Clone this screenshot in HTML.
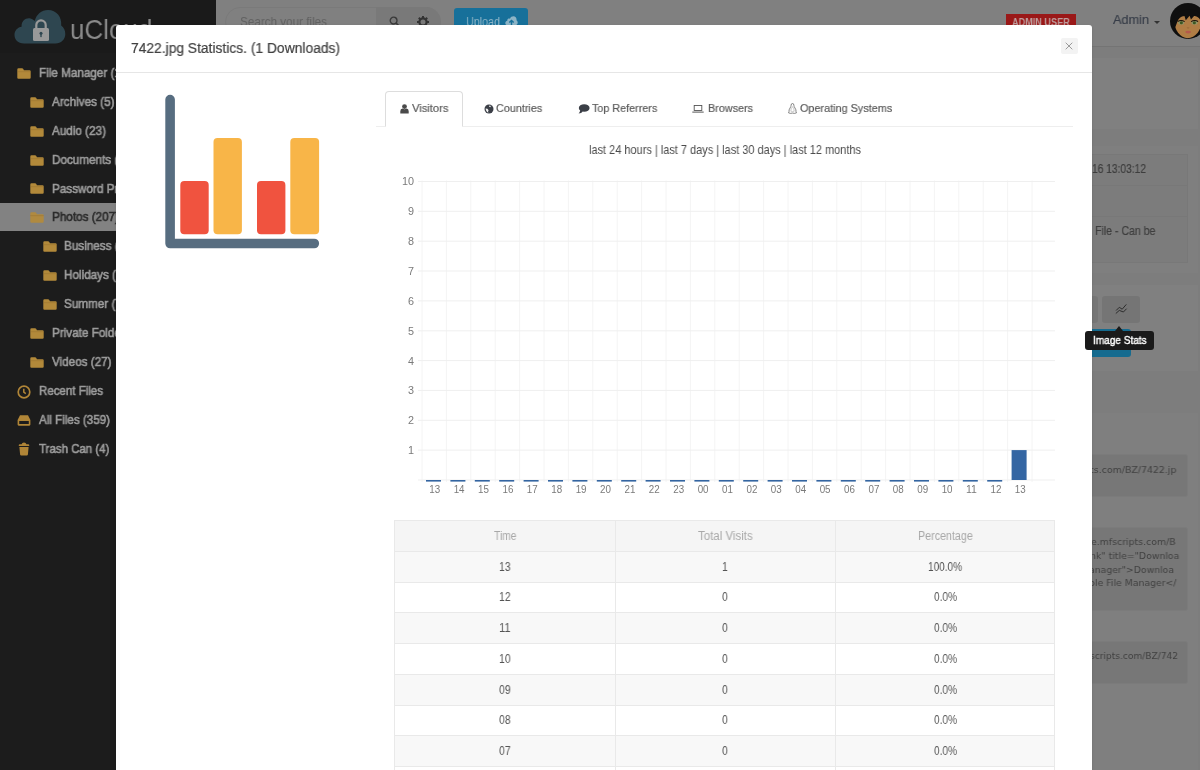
<!DOCTYPE html>
<html lang="en"><head><meta charset="utf-8"><title>uCloud - File Manager</title>
<style>
html,body{margin:0;padding:0}
body{width:1200px;height:770px;overflow:hidden;position:relative;background:#7d7d7d;font-family:"Liberation Sans",sans-serif;color:#555}
.a{position:absolute;white-space:nowrap}
.t{will-change:transform}
.ic{position:absolute;display:block}
#side{left:0;top:0;width:216px;height:770px;background:#1c1c1c;overflow:hidden}
#side .hd{left:0;top:0;width:216px;height:53px;background:#1a1a1a}
.sel{left:0;width:216px;height:28px;background:#828282}
#top{left:216px;top:0;width:984px;height:46px;background:#808080;border-bottom:1px solid #747474}
#modal{left:116px;top:25px;width:976px;height:760px;background:#fff;border-radius:3px;box-shadow:0 1px 3px rgba(0,0,0,.12)}
table{border-collapse:collapse;table-layout:fixed}
td,th{border:1px solid #e9e9e9;padding:0}
th{background:#f5f5f5}
tr.o td{background:#f8f8f8}
.box{background:#777;border:1px solid #7b7b7b;border-radius:3px;box-sizing:border-box;overflow:hidden}
</style></head><body>

<div id="side" class="a"><div class="hd a"></div>
<svg class="ic" style="left:13px;top:8px" width="54" height="38" viewBox="0 0 54 38">
<path d="M11 35.5 C5 35.5 1.5 31.5 1.5 27 C1.5 22.5 4.8 19.3 8.6 18.8 C8.2 12.5 13 9.5 17.5 10.5 C19.3 11 20.6 11.8 21.7 13 C23.2 6.5 28.5 2 35 2 C43.5 2 49 9 48.2 17.5 C51 19.5 52.3 22.5 52.3 26 C52.3 31.5 48 35.5 42.5 35.5 Z" fill="#2e4650"/>
<rect x="20" y="20" width="16" height="13" rx="1.5" fill="#999"/>
<path d="M23.3 20.5 V17 A4.7 4.7 0 0 1 32.7 17 V20.5" fill="none" stroke="#999" stroke-width="2.2"/>
<circle cx="28" cy="25.3" r="1.5" fill="#2e4650"/><rect x="27.3" y="25.5" width="1.4" height="3.6" fill="#2e4650"/>
</svg>
<div class="a t" style="left:70.00px;top:16.30px;font-size:28px;line-height:1;color:#8a8a8a;transform-origin:0 0;transform:scaleX(0.9275)">uCloud</div>
<svg class="ic" style="left:17px;top:67.5px" width="14" height="11" viewBox="0 0 14 11"><path d="M0.3 1.4 Q0.3 0.2 1.5 0.2 H5 Q5.9 0.2 6.3 1 L6.9 2.3 H12.6 Q13.7 2.3 13.7 3.4 V9.7 Q13.7 10.8 12.6 10.8 H1.4 Q0.3 10.8 0.3 9.7 Z" fill="#b2893a"/><path d="M0.3 3.4 H13.7 V4.1 H0.3 Z" fill="#8f6c2c" opacity="0.55"/></svg>
<div class="a t" style="left:39.00px;top:67.09px;font-size:12.3px;line-height:1;color:#9c9c9c;transform-origin:0 0;transform:scaleX(0.9510);-webkit-text-stroke:0.6px #9c9c9c">File Manager (12)</div>
<svg class="ic" style="left:30px;top:96.5px" width="14" height="11" viewBox="0 0 14 11"><path d="M0.3 1.4 Q0.3 0.2 1.5 0.2 H5 Q5.9 0.2 6.3 1 L6.9 2.3 H12.6 Q13.7 2.3 13.7 3.4 V9.7 Q13.7 10.8 12.6 10.8 H1.4 Q0.3 10.8 0.3 9.7 Z" fill="#b2893a"/><path d="M0.3 3.4 H13.7 V4.1 H0.3 Z" fill="#8f6c2c" opacity="0.55"/></svg>
<div class="a t" style="left:51.50px;top:96.09px;font-size:12.3px;line-height:1;color:#9c9c9c;transform-origin:0 0;transform:scaleX(0.9526);-webkit-text-stroke:0.6px #9c9c9c">Archives (5)</div>
<svg class="ic" style="left:30px;top:125.5px" width="14" height="11" viewBox="0 0 14 11"><path d="M0.3 1.4 Q0.3 0.2 1.5 0.2 H5 Q5.9 0.2 6.3 1 L6.9 2.3 H12.6 Q13.7 2.3 13.7 3.4 V9.7 Q13.7 10.8 12.6 10.8 H1.4 Q0.3 10.8 0.3 9.7 Z" fill="#b2893a"/><path d="M0.3 3.4 H13.7 V4.1 H0.3 Z" fill="#8f6c2c" opacity="0.55"/></svg>
<div class="a t" style="left:51.50px;top:125.09px;font-size:12.3px;line-height:1;color:#9c9c9c;transform-origin:0 0;transform:scaleX(0.9515);-webkit-text-stroke:0.6px #9c9c9c">Audio (23)</div>
<svg class="ic" style="left:30px;top:154.5px" width="14" height="11" viewBox="0 0 14 11"><path d="M0.3 1.4 Q0.3 0.2 1.5 0.2 H5 Q5.9 0.2 6.3 1 L6.9 2.3 H12.6 Q13.7 2.3 13.7 3.4 V9.7 Q13.7 10.8 12.6 10.8 H1.4 Q0.3 10.8 0.3 9.7 Z" fill="#b2893a"/><path d="M0.3 3.4 H13.7 V4.1 H0.3 Z" fill="#8f6c2c" opacity="0.55"/></svg>
<div class="a t" style="left:51.50px;top:154.09px;font-size:12.3px;line-height:1;color:#9c9c9c;transform-origin:0 0;transform:scaleX(0.9510);-webkit-text-stroke:0.6px #9c9c9c">Documents (14)</div>
<svg class="ic" style="left:30px;top:183.0px" width="14" height="11" viewBox="0 0 14 11"><path d="M0.3 1.4 Q0.3 0.2 1.5 0.2 H5 Q5.9 0.2 6.3 1 L6.9 2.3 H12.6 Q13.7 2.3 13.7 3.4 V9.7 Q13.7 10.8 12.6 10.8 H1.4 Q0.3 10.8 0.3 9.7 Z" fill="#b2893a"/><path d="M0.3 3.4 H13.7 V4.1 H0.3 Z" fill="#8f6c2c" opacity="0.55"/></svg>
<div class="a t" style="left:51.50px;top:182.59px;font-size:12.3px;line-height:1;color:#9c9c9c;transform-origin:0 0;transform:scaleX(0.9510);-webkit-text-stroke:0.6px #9c9c9c">Password Protected (3)</div>
<div class="a sel" style="top:203px"></div>
<svg class="ic" style="left:30px;top:211.5px" width="14" height="11" viewBox="0 0 14 11"><path d="M0.3 1.4 Q0.3 0.2 1.5 0.2 H5 Q5.9 0.2 6.3 1 L6.9 2.3 H12.6 Q13.7 2.3 13.7 3.4 V9.7 Q13.7 10.8 12.6 10.8 H1.4 Q0.3 10.8 0.3 9.7 Z" fill="#b08a40"/><path d="M0.3 3.4 H13.7 V4.1 H0.3 Z" fill="#8f6c2c" opacity="0.55"/></svg>
<div class="a t" style="left:51.50px;top:211.09px;font-size:12.3px;line-height:1;color:#2b2b2b;transform-origin:0 0;transform:scaleX(0.9510);-webkit-text-stroke:0.6px #2b2b2b">Photos (207)</div>
<svg class="ic" style="left:43px;top:240.5px" width="14" height="11" viewBox="0 0 14 11"><path d="M0.3 1.4 Q0.3 0.2 1.5 0.2 H5 Q5.9 0.2 6.3 1 L6.9 2.3 H12.6 Q13.7 2.3 13.7 3.4 V9.7 Q13.7 10.8 12.6 10.8 H1.4 Q0.3 10.8 0.3 9.7 Z" fill="#b2893a"/><path d="M0.3 3.4 H13.7 V4.1 H0.3 Z" fill="#8f6c2c" opacity="0.55"/></svg>
<div class="a t" style="left:64.00px;top:240.09px;font-size:12.3px;line-height:1;color:#9c9c9c;transform-origin:0 0;transform:scaleX(0.9510);-webkit-text-stroke:0.6px #9c9c9c">Business (41)</div>
<svg class="ic" style="left:43px;top:269.5px" width="14" height="11" viewBox="0 0 14 11"><path d="M0.3 1.4 Q0.3 0.2 1.5 0.2 H5 Q5.9 0.2 6.3 1 L6.9 2.3 H12.6 Q13.7 2.3 13.7 3.4 V9.7 Q13.7 10.8 12.6 10.8 H1.4 Q0.3 10.8 0.3 9.7 Z" fill="#b2893a"/><path d="M0.3 3.4 H13.7 V4.1 H0.3 Z" fill="#8f6c2c" opacity="0.55"/></svg>
<div class="a t" style="left:64.00px;top:269.09px;font-size:12.3px;line-height:1;color:#9c9c9c;transform-origin:0 0;transform:scaleX(0.9510);-webkit-text-stroke:0.6px #9c9c9c">Holidays (96)</div>
<svg class="ic" style="left:43px;top:298.5px" width="14" height="11" viewBox="0 0 14 11"><path d="M0.3 1.4 Q0.3 0.2 1.5 0.2 H5 Q5.9 0.2 6.3 1 L6.9 2.3 H12.6 Q13.7 2.3 13.7 3.4 V9.7 Q13.7 10.8 12.6 10.8 H1.4 Q0.3 10.8 0.3 9.7 Z" fill="#b2893a"/><path d="M0.3 3.4 H13.7 V4.1 H0.3 Z" fill="#8f6c2c" opacity="0.55"/></svg>
<div class="a t" style="left:64.00px;top:298.09px;font-size:12.3px;line-height:1;color:#9c9c9c;transform-origin:0 0;transform:scaleX(0.9510);-webkit-text-stroke:0.6px #9c9c9c">Summer (70)</div>
<svg class="ic" style="left:30px;top:327.5px" width="14" height="11" viewBox="0 0 14 11"><path d="M0.3 1.4 Q0.3 0.2 1.5 0.2 H5 Q5.9 0.2 6.3 1 L6.9 2.3 H12.6 Q13.7 2.3 13.7 3.4 V9.7 Q13.7 10.8 12.6 10.8 H1.4 Q0.3 10.8 0.3 9.7 Z" fill="#b2893a"/><path d="M0.3 3.4 H13.7 V4.1 H0.3 Z" fill="#8f6c2c" opacity="0.55"/></svg>
<div class="a t" style="left:51.50px;top:327.09px;font-size:12.3px;line-height:1;color:#9c9c9c;transform-origin:0 0;transform:scaleX(0.9510);-webkit-text-stroke:0.6px #9c9c9c">Private Folder (6)</div>
<svg class="ic" style="left:30px;top:356.5px" width="14" height="11" viewBox="0 0 14 11"><path d="M0.3 1.4 Q0.3 0.2 1.5 0.2 H5 Q5.9 0.2 6.3 1 L6.9 2.3 H12.6 Q13.7 2.3 13.7 3.4 V9.7 Q13.7 10.8 12.6 10.8 H1.4 Q0.3 10.8 0.3 9.7 Z" fill="#b2893a"/><path d="M0.3 3.4 H13.7 V4.1 H0.3 Z" fill="#8f6c2c" opacity="0.55"/></svg>
<div class="a t" style="left:51.50px;top:356.09px;font-size:12.3px;line-height:1;color:#9c9c9c;transform-origin:0 0;transform:scaleX(0.9494);-webkit-text-stroke:0.6px #9c9c9c">Videos (27)</div>
<svg class="ic" style="left:17px;top:384.5px" width="14" height="14" viewBox="0 0 14 14"><circle cx="7" cy="7" r="5.8" fill="none" stroke="#b08537" stroke-width="1.7"/><path d="M6.8 3.8 V7.2 L8.8 8.6" fill="none" stroke="#b08537" stroke-width="1.5"/></svg>
<div class="a t" style="left:39.00px;top:385.09px;font-size:12.3px;line-height:1;color:#9c9c9c;transform-origin:0 0;transform:scaleX(0.9364);-webkit-text-stroke:0.6px #9c9c9c">Recent Files</div>
<svg class="ic" style="left:17px;top:414.5px" width="14" height="11" viewBox="0 0 14 11"><path d="M3 0.3 H11 L13.4 5 V9.6 Q13.4 10.7 12.3 10.7 H1.7 Q0.6 10.7 0.6 9.6 V5 Z M2.2 6 V8.9 H11.8 V6 Z" fill="#b08537" fill-rule="evenodd"/></svg>
<div class="a t" style="left:39.00px;top:414.09px;font-size:12.3px;line-height:1;color:#9c9c9c;transform-origin:0 0;transform:scaleX(0.9445);-webkit-text-stroke:0.6px #9c9c9c">All Files (359)</div>
<svg class="ic" style="left:18px;top:442px" width="12" height="14" viewBox="0 0 12 14"><path d="M0.8 3 Q0.8 2.2 1.8 2.2 H3.6 Q4 0.5 6 0.5 Q8 0.5 8.4 2.2 H10.2 Q11.2 2.2 11.2 3 V4 H0.8 Z M1.4 4.9 H10.6 L9.9 12.4 Q9.8 13.5 8.7 13.5 H3.3 Q2.2 13.5 2.1 12.4 Z" fill="#b08537"/></svg>
<div class="a t" style="left:39.30px;top:443.09px;font-size:12.3px;line-height:1;color:#9c9c9c;transform-origin:0 0;transform:scaleX(0.9336);-webkit-text-stroke:0.6px #9c9c9c">Trash Can (4)</div>
</div>
<div id="top" class="a">
<div class="a" style="left:9px;top:7px;width:216px;height:30px;border:1px solid #7a7a7a;border-radius:15px;box-sizing:border-box;background:#808080"></div>
<div class="a" style="left:160px;top:7px;width:65px;height:30px;border-radius:0 15px 15px 0;background:#797979"></div>
<svg class="ic" style="left:173px;top:16px" width="11" height="11" viewBox="0 0 11 11"><circle cx="4.6" cy="4.6" r="3.4" fill="none" stroke="#3a3a3a" stroke-width="1.3"/><path d="M7.1 7.1 L10 10" stroke="#3a3a3a" stroke-width="1.6"/></svg>
<svg class="ic" style="left:201px;top:16px" width="12" height="12" viewBox="0 0 12 12"><circle cx="6" cy="6" r="3.6" fill="none" stroke="#333" stroke-width="2.2"/><g stroke="#333" stroke-width="2"><path d="M6 0 V2.2 M6 9.8 V12 M0 6 H2.2 M9.8 6 H12 M1.8 1.8 L3.2 3.2 M8.8 8.8 L10.2 10.2 M1.8 10.2 L3.2 8.8 M8.8 3.2 L10.2 1.8"/></g></svg>
<div class="a" style="left:238px;top:8px;width:74px;height:30px;border-radius:3px;background:#17709a"></div>
<svg class="ic" style="left:289px;top:16px" width="13" height="10" viewBox="0 0 13 10"><path d="M3 9.5 C1.2 9.5 0.3 8.3 0.3 7 C0.3 5.7 1.3 4.8 2.3 4.7 C2.2 2.8 3.8 2.2 5 2.8 C5.6 1 7 0.3 8.4 0.3 C10.6 0.3 11.8 2.2 11.5 4.2 C12.3 4.7 12.7 5.6 12.7 6.6 C12.7 8.3 11.5 9.5 10 9.5 Z" fill="#8db4c6"/><path d="M6.5 9.5 V5 M4.3 6.6 L6.5 4.4 L8.7 6.6" stroke="#17709a" stroke-width="1.4" fill="none"/></svg>
<div class="a" style="left:790px;top:14.4px;width:70.2px;height:18px;background:#9a1818"></div>
<div class="a" style="left:938px;top:21px;width:0;height:0;border-left:3.5px solid transparent;border-right:3.5px solid transparent;border-top:3.5px solid #333"></div>
<svg class="ic" style="left:953.8px;top:3.4px" width="36.4" height="36.4" viewBox="0 0 36 36"><defs><clipPath id="av"><circle cx="17.8" cy="17.8" r="17.8"/></clipPath></defs><g clip-path="url(#av)"><rect width="36" height="36" fill="#0f0f0f"/><g transform="translate(-1.2 -0.7) scale(1.02)">
<path d="M5.5 17 Q5 24 9 29.5 Q13 34.5 18.3 34.8 Q24 34.5 28 29.5 Q32 24 31.5 17 Q30 10.5 18.5 10.5 Q7 10.5 5.5 17 Z" fill="#b07d45"/>
<path d="M3 19 Q7 7 20 7 Q31 7 34 17 L31.5 19 Q29 13 24.5 13.2 L21.5 16.8 L20.2 13 L16.5 17.4 L15.2 13.4 Q10 14 8.2 19 L6 25 Z" fill="#0f0f0f"/>
<ellipse cx="12" cy="19.8" rx="3" ry="1.8" fill="#8e9468"/><ellipse cx="25" cy="19.8" rx="3" ry="1.8" fill="#8e9468"/>
<circle cx="12.2" cy="19.8" r="1.5" fill="#3c5622"/><circle cx="24.8" cy="19.8" r="1.5" fill="#3c5622"/>
<path d="M8.6 18.6 Q12 16.6 15.4 18.8 M21.6 18.8 Q25 16.6 28.4 18.6" fill="none" stroke="#1a130c" stroke-width="1"/>
<path d="M17.6 24.6 Q18.6 25.4 19.8 24.6" fill="none" stroke="#946535" stroke-width="0.8"/>
<ellipse cx="18.8" cy="28.9" rx="2.8" ry="1.4" fill="#b4584c"/>
</g></g></svg>
</div>
<div class="a t" style="left:240.00px;top:15.30px;font-size:13px;line-height:1;color:#616161;transform-origin:0 0;transform:scaleX(0.8985)">Search your files</div>
<div class="a t" style="left:466.00px;top:14.60px;font-size:13px;line-height:1;color:#8db4c6;transform-origin:0 0;transform:scaleX(0.8252)">Upload</div>
<div class="a t" style="left:1012.40px;top:16.69px;font-size:11px;line-height:1;color:#bd9f9f;transform-origin:0 0;transform:scaleX(0.8296);font-weight:bold">ADMIN USER</div>
<div class="a t" style="left:1113.20px;top:13.47px;font-size:13.5px;line-height:1;color:#373d48;transform-origin:0 0;transform:scaleX(0.9408);-webkit-text-stroke:0.2px #373d48">Admin</div>
<div class="a" style="left:1000px;top:58px;width:197.5px;height:71px;background:#808080"></div>
<div class="a" style="left:1000px;top:146px;width:197.5px;height:127px;background:#7f7f7f"></div>
<div class="a" style="left:1000px;top:413px;width:197.5px;height:360px;background:#7f7f7f"></div>
<div class="a" style="left:1000px;top:154px;width:188px;height:109px;background:#7c7c7c;border:1px solid #787878;box-sizing:border-box"></div>
<div class="a" style="left:1000px;top:185px;width:188px;height:1px;background:#787878"></div>
<div class="a" style="left:1000px;top:216px;width:188px;height:1px;background:#787878"></div>
<div class="a t" style="left:1092.00px;top:163.23px;font-size:12.6px;line-height:1;color:#3e3e3e;transform-origin:0 0;transform:scaleX(0.8116);-webkit-text-stroke:0.2px #3e3e3e">16 13:03:12</div>
<div class="a t" style="left:1095.30px;top:224.53px;font-size:12.6px;line-height:1;color:#3e3e3e;transform-origin:0 0;transform:scaleX(0.8390);-webkit-text-stroke:0.2px #3e3e3e">File - Can be</div>
<div class="a" style="left:1000px;top:285px;width:197.5px;height:86px;background:#808080"></div>
<div class="a" style="left:1060px;top:295.5px;width:37.5px;height:27.7px;border-radius:3px;background:#767676"></div>
<div class="a" style="left:1101.5px;top:295.5px;width:38.6px;height:27.7px;border-radius:3px;background:#757575"></div>
<svg class="ic" style="left:1114px;top:302px" width="15" height="14" viewBox="1114 302 15 14"><path d="M1116.1 310.5 L1119.3 307.3 L1122.2 309.2 L1126.3 304.4 M1115.8 313.5 L1119.3 310.4 L1123.4 312 L1126.6 308.7" fill="none" stroke="#2c2c2c" stroke-width="1"/></svg>
<div class="a" style="left:1060px;top:328.8px;width:71px;height:27.8px;border-radius:3px;background:#166b8f"></div>
<div class="a box" style="left:1000px;top:454px;width:188px;height:43px"></div>
<div class="a t" style="left:1089.50px;top:464.57px;font-size:9.5px;line-height:1;color:#414141;transform-origin:0 0;transform:scaleX(0.9910);font-family:'DejaVu Sans','Liberation Sans',sans-serif">ts.com/BZ/7422.jp</div>
<div class="a box" style="left:1000px;top:527px;width:188px;height:84px"></div>
<div class="a t" style="left:1090.50px;top:537.17px;font-size:9.5px;line-height:1;color:#414141;transform-origin:0 0;transform:scaleX(0.9835);font-family:'DejaVu Sans','Liberation Sans',sans-serif">e.mfscripts.com/B</div>
<div class="a t" style="left:1089.50px;top:550.77px;font-size:9.5px;line-height:1;color:#414141;transform-origin:0 0;transform:scaleX(0.9812);font-family:'DejaVu Sans','Liberation Sans',sans-serif">nk" title="Downloa</div>
<div class="a t" style="left:1089.00px;top:564.57px;font-size:9.5px;line-height:1;color:#414141;transform-origin:0 0;transform:scaleX(0.9774);font-family:'DejaVu Sans','Liberation Sans',sans-serif">anager"&gt;Downloa</div>
<div class="a t" style="left:1088.50px;top:578.17px;font-size:9.5px;line-height:1;color:#414141;transform-origin:0 0;transform:scaleX(0.9802);font-family:'DejaVu Sans','Liberation Sans',sans-serif">ble File Manager&lt;/</div>
<div class="a box" style="left:1000px;top:641px;width:188px;height:43px"></div>
<div class="a t" style="left:1090.00px;top:650.97px;font-size:9.5px;line-height:1;color:#414141;transform-origin:0 0;transform:scaleX(0.9534);font-family:'DejaVu Sans','Liberation Sans',sans-serif">scripts.com/BZ/742</div>
<div id="modal" class="a">
<div class="a" style="left:0;top:47px;width:976px;height:1px;background:#e6e6e6"></div>
<div class="a" style="left:945px;top:13px;width:17px;height:16px;background:#f3f3f3;border-radius:2px"></div>
<svg class="ic" style="left:949px;top:17px" width="8" height="8" viewBox="0 0 8 8"><path d="M0.7 0.7 L7.3 7.3 M7.3 0.7 L0.7 7.3" stroke="#8a8a8a" stroke-width="0.85"/></svg>
<svg class="ic" style="left:44px;top:65px" width="170" height="165" viewBox="160 90 170 165">
<path d="M170.1 99.6 V243.5 H314.3" fill="none" stroke="#576d80" stroke-width="9.6" stroke-linecap="round" stroke-linejoin="round"/>
<rect x="180.3" y="181" width="28.4" height="53.2" rx="4" fill="#f0533f"/>
<rect x="213.5" y="138" width="28.4" height="96.2" rx="4" fill="#f8b548"/>
<rect x="257" y="181" width="28.4" height="53.2" rx="4" fill="#f0533f"/>
<rect x="290.3" y="138" width="28.8" height="96.2" rx="4" fill="#f8b548"/>
</svg>
<div class="a" style="left:260px;top:101px;width:697px;height:1px;background:#eeeeee"></div>
<div class="a" style="left:269px;top:66px;width:78px;height:36px;border:1px solid #ddd;border-bottom:1px solid #fff;border-radius:4px 4px 0 0;box-sizing:border-box;background:#fff"></div>
<svg class="ic" style="left:284px;top:79px" width="9" height="10" viewBox="0 0 9 10"><circle cx="4.5" cy="2.6" r="2.4" fill="#4a4a4a"/><path d="M0.3 9.6 V7.2 Q0.3 4.8 2.6 4.6 Q4.5 5.8 6.4 4.6 Q8.7 4.8 8.7 7.2 V9.6 Z" fill="#4a4a4a"/></svg>
<svg class="ic" style="left:367.5px;top:78.5px" width="10" height="10" viewBox="0 0 10 10"><circle cx="5" cy="5" r="4.5" fill="#3b3f47"/><path d="M1.6 4.4 L3.4 4.8 L4.6 6.2 L4 7.4 L4.6 8.6 Q2 8 1.6 4.4 Z M5.4 1.4 L7 2 L6.2 3.2 L5 2.6 Z" fill="#f4f4f4"/></svg>
<svg class="ic" style="left:461.5px;top:79px" width="12" height="10" viewBox="0 0 12 10"><ellipse cx="6.2" cy="4" rx="5.4" ry="3.8" fill="#3b3f47"/><path d="M2.2 6 Q2 8.4 0.6 9.6 Q3.4 9.4 4.8 7.4 Z" fill="#3b3f47"/></svg>
<svg class="ic" style="left:576px;top:79.5px" width="12" height="8" viewBox="0 0 12 8"><rect x="2.2" y="0.5" width="7.6" height="5" fill="none" stroke="#555" stroke-width="0.9"/><path d="M0.3 7.1 H11.7" stroke="#555" stroke-width="1"/></svg>
<svg class="ic" style="left:672.3px;top:77.8px" width="9" height="11" viewBox="0 0 9 11"><path d="M4.5 0.5 Q5.9 0.5 5.9 2.3 Q5.9 3.5 6.9 4.9 Q8.3 6.9 8 8.6 L8.5 9.8 L6.6 10.4 Q4.5 9.7 2.4 10.4 L0.5 9.8 L1 8.6 Q0.7 6.9 2.1 4.9 Q3.1 3.5 3.1 2.3 Q3.1 0.5 4.5 0.5 Z" fill="none" stroke="#666" stroke-width="0.8"/><path d="M4.5 3.6 Q6.3 5.6 6.2 8.2 Q4.5 9 2.8 8.2 Q2.7 5.6 4.5 3.6 Z" fill="none" stroke="#999" stroke-width="0.5"/></svg>
<svg class="ic" style="left:274px;top:145px" width="680" height="335" viewBox="390 170 680 335" font-family="Liberation Sans, sans-serif" font-size="10.8" fill="#7a7a7a"><path d="M422.0 180.5 V482.0" stroke="#f4f4f4" stroke-width="1"/><path d="M446.4 180.5 V482.0" stroke="#f4f4f4" stroke-width="1"/><path d="M470.8 180.5 V482.0" stroke="#f4f4f4" stroke-width="1"/><path d="M495.2 180.5 V482.0" stroke="#f4f4f4" stroke-width="1"/><path d="M519.6 180.5 V482.0" stroke="#f4f4f4" stroke-width="1"/><path d="M544.0 180.5 V482.0" stroke="#f4f4f4" stroke-width="1"/><path d="M568.4 180.5 V482.0" stroke="#f4f4f4" stroke-width="1"/><path d="M592.8 180.5 V482.0" stroke="#f4f4f4" stroke-width="1"/><path d="M617.2 180.5 V482.0" stroke="#f4f4f4" stroke-width="1"/><path d="M641.6 180.5 V482.0" stroke="#f4f4f4" stroke-width="1"/><path d="M666.0 180.5 V482.0" stroke="#f4f4f4" stroke-width="1"/><path d="M690.4 180.5 V482.0" stroke="#f4f4f4" stroke-width="1"/><path d="M714.8 180.5 V482.0" stroke="#f4f4f4" stroke-width="1"/><path d="M739.2 180.5 V482.0" stroke="#f4f4f4" stroke-width="1"/><path d="M763.6 180.5 V482.0" stroke="#f4f4f4" stroke-width="1"/><path d="M788.0 180.5 V482.0" stroke="#f4f4f4" stroke-width="1"/><path d="M812.4 180.5 V482.0" stroke="#f4f4f4" stroke-width="1"/><path d="M836.8 180.5 V482.0" stroke="#f4f4f4" stroke-width="1"/><path d="M861.2 180.5 V482.0" stroke="#f4f4f4" stroke-width="1"/><path d="M885.6 180.5 V482.0" stroke="#f4f4f4" stroke-width="1"/><path d="M910.0 180.5 V482.0" stroke="#f4f4f4" stroke-width="1"/><path d="M934.4 180.5 V482.0" stroke="#f4f4f4" stroke-width="1"/><path d="M958.8 180.5 V482.0" stroke="#f4f4f4" stroke-width="1"/><path d="M983.2 180.5 V482.0" stroke="#f4f4f4" stroke-width="1"/><path d="M1007.6 180.5 V482.0" stroke="#f4f4f4" stroke-width="1"/><path d="M1032.0 180.5 V482.0" stroke="#f4f4f4" stroke-width="1"/><path d="M418 480.0 H1055" stroke="#efefef" stroke-width="1"/><path d="M418 450.1 H1055" stroke="#efefef" stroke-width="1"/><text x="414" y="454.0" text-anchor="end">1</text><path d="M418 420.3 H1055" stroke="#efefef" stroke-width="1"/><text x="414" y="424.2" text-anchor="end">2</text><path d="M418 390.4 H1055" stroke="#efefef" stroke-width="1"/><text x="414" y="394.3" text-anchor="end">3</text><path d="M418 360.6 H1055" stroke="#efefef" stroke-width="1"/><text x="414" y="364.5" text-anchor="end">4</text><path d="M418 330.8 H1055" stroke="#efefef" stroke-width="1"/><text x="414" y="334.6" text-anchor="end">5</text><path d="M418 300.9 H1055" stroke="#efefef" stroke-width="1"/><text x="414" y="304.8" text-anchor="end">6</text><path d="M418 271.0 H1055" stroke="#efefef" stroke-width="1"/><text x="414" y="274.9" text-anchor="end">7</text><path d="M418 241.2 H1055" stroke="#efefef" stroke-width="1"/><text x="414" y="245.1" text-anchor="end">8</text><path d="M418 211.3 H1055" stroke="#efefef" stroke-width="1"/><text x="414" y="215.2" text-anchor="end">9</text><path d="M418 181.5 H1055" stroke="#efefef" stroke-width="1"/><text x="414" y="185.4" text-anchor="end">10</text><text x="434.7" y="493.2" text-anchor="middle" textLength="10.9" lengthAdjust="spacingAndGlyphs">13</text><rect x="426.0" y="480.0" width="15" height="1.6" fill="#3465a1"/><text x="459.1" y="493.2" text-anchor="middle" textLength="10.9" lengthAdjust="spacingAndGlyphs">14</text><rect x="450.4" y="480.0" width="15" height="1.6" fill="#3465a1"/><text x="483.5" y="493.2" text-anchor="middle" textLength="10.9" lengthAdjust="spacingAndGlyphs">15</text><rect x="474.8" y="480.0" width="15" height="1.6" fill="#3465a1"/><text x="507.9" y="493.2" text-anchor="middle" textLength="10.9" lengthAdjust="spacingAndGlyphs">16</text><rect x="499.2" y="480.0" width="15" height="1.6" fill="#3465a1"/><text x="532.3" y="493.2" text-anchor="middle" textLength="10.9" lengthAdjust="spacingAndGlyphs">17</text><rect x="523.6" y="480.0" width="15" height="1.6" fill="#3465a1"/><text x="556.7" y="493.2" text-anchor="middle" textLength="10.9" lengthAdjust="spacingAndGlyphs">18</text><rect x="548.0" y="480.0" width="15" height="1.6" fill="#3465a1"/><text x="581.1" y="493.2" text-anchor="middle" textLength="10.9" lengthAdjust="spacingAndGlyphs">19</text><rect x="572.4" y="480.0" width="15" height="1.6" fill="#3465a1"/><text x="605.5" y="493.2" text-anchor="middle" textLength="10.9" lengthAdjust="spacingAndGlyphs">20</text><rect x="596.8" y="480.0" width="15" height="1.6" fill="#3465a1"/><text x="629.9" y="493.2" text-anchor="middle" textLength="10.9" lengthAdjust="spacingAndGlyphs">21</text><rect x="621.2" y="480.0" width="15" height="1.6" fill="#3465a1"/><text x="654.3" y="493.2" text-anchor="middle" textLength="10.9" lengthAdjust="spacingAndGlyphs">22</text><rect x="645.6" y="480.0" width="15" height="1.6" fill="#3465a1"/><text x="678.7" y="493.2" text-anchor="middle" textLength="10.9" lengthAdjust="spacingAndGlyphs">23</text><rect x="670.0" y="480.0" width="15" height="1.6" fill="#3465a1"/><text x="703.1" y="493.2" text-anchor="middle" textLength="10.9" lengthAdjust="spacingAndGlyphs">00</text><rect x="694.4" y="480.0" width="15" height="1.6" fill="#3465a1"/><text x="727.5" y="493.2" text-anchor="middle" textLength="10.9" lengthAdjust="spacingAndGlyphs">01</text><rect x="718.8" y="480.0" width="15" height="1.6" fill="#3465a1"/><text x="751.9" y="493.2" text-anchor="middle" textLength="10.9" lengthAdjust="spacingAndGlyphs">02</text><rect x="743.2" y="480.0" width="15" height="1.6" fill="#3465a1"/><text x="776.3" y="493.2" text-anchor="middle" textLength="10.9" lengthAdjust="spacingAndGlyphs">03</text><rect x="767.6" y="480.0" width="15" height="1.6" fill="#3465a1"/><text x="800.7" y="493.2" text-anchor="middle" textLength="10.9" lengthAdjust="spacingAndGlyphs">04</text><rect x="792.0" y="480.0" width="15" height="1.6" fill="#3465a1"/><text x="825.1" y="493.2" text-anchor="middle" textLength="10.9" lengthAdjust="spacingAndGlyphs">05</text><rect x="816.4" y="480.0" width="15" height="1.6" fill="#3465a1"/><text x="849.5" y="493.2" text-anchor="middle" textLength="10.9" lengthAdjust="spacingAndGlyphs">06</text><rect x="840.8" y="480.0" width="15" height="1.6" fill="#3465a1"/><text x="873.9" y="493.2" text-anchor="middle" textLength="10.9" lengthAdjust="spacingAndGlyphs">07</text><rect x="865.2" y="480.0" width="15" height="1.6" fill="#3465a1"/><text x="898.3" y="493.2" text-anchor="middle" textLength="10.9" lengthAdjust="spacingAndGlyphs">08</text><rect x="889.6" y="480.0" width="15" height="1.6" fill="#3465a1"/><text x="922.7" y="493.2" text-anchor="middle" textLength="10.9" lengthAdjust="spacingAndGlyphs">09</text><rect x="914.0" y="480.0" width="15" height="1.6" fill="#3465a1"/><text x="947.1" y="493.2" text-anchor="middle" textLength="10.9" lengthAdjust="spacingAndGlyphs">10</text><rect x="938.4" y="480.0" width="15" height="1.6" fill="#3465a1"/><text x="971.5" y="493.2" text-anchor="middle" textLength="10.9" lengthAdjust="spacingAndGlyphs">11</text><rect x="962.8" y="480.0" width="15" height="1.6" fill="#3465a1"/><text x="995.9" y="493.2" text-anchor="middle" textLength="10.9" lengthAdjust="spacingAndGlyphs">12</text><rect x="987.2" y="480.0" width="15" height="1.6" fill="#3465a1"/><text x="1020.3" y="493.2" text-anchor="middle" textLength="10.9" lengthAdjust="spacingAndGlyphs">13</text><rect x="1011.6" y="450.1" width="15" height="29.9" fill="#3466a3"/></svg>
<div class="a" style="left:278px;top:495px;width:661px;height:31px;background:#f5f5f5"></div>
<div class="a" style="left:278px;top:526px;width:661px;height:31px;background:#f8f8f8"></div>
<div class="a" style="left:278px;top:587px;width:661px;height:31px;background:#f8f8f8"></div>
<div class="a" style="left:278px;top:649px;width:661px;height:31px;background:#f8f8f8"></div>
<div class="a" style="left:278px;top:710px;width:661px;height:31px;background:#f8f8f8"></div>
<div class="a" style="left:278px;top:495px;width:661px;height:1px;background:#e9e9e9"></div>
<div class="a" style="left:278px;top:526px;width:661px;height:1px;background:#e9e9e9"></div>
<div class="a" style="left:278px;top:557px;width:661px;height:1px;background:#e9e9e9"></div>
<div class="a" style="left:278px;top:587px;width:661px;height:1px;background:#e9e9e9"></div>
<div class="a" style="left:278px;top:618px;width:661px;height:1px;background:#e9e9e9"></div>
<div class="a" style="left:278px;top:649px;width:661px;height:1px;background:#e9e9e9"></div>
<div class="a" style="left:278px;top:680px;width:661px;height:1px;background:#e9e9e9"></div>
<div class="a" style="left:278px;top:710px;width:661px;height:1px;background:#e9e9e9"></div>
<div class="a" style="left:278px;top:741px;width:661px;height:1px;background:#e9e9e9"></div>
<div class="a" style="left:278px;top:772px;width:661px;height:1px;background:#e9e9e9"></div>
<div class="a" style="left:278px;top:495px;width:1px;height:260px;background:#e9e9e9"></div>
<div class="a" style="left:499px;top:495px;width:1px;height:260px;background:#e9e9e9"></div>
<div class="a" style="left:719px;top:495px;width:1px;height:260px;background:#e9e9e9"></div>
<div class="a" style="left:938px;top:495px;width:1px;height:260px;background:#e9e9e9"></div>
</div>
<div class="a t" style="left:131.00px;top:41.15px;font-size:14px;line-height:1;color:#414141;transform-origin:0 0;transform:scaleX(0.9874);-webkit-text-stroke:0.2px #414141">7422.jpg Statistics. (1 Downloads)</div>
<div class="a t" style="left:411.50px;top:101.90px;font-size:11.7px;line-height:1;color:#5c5c5c;transform-origin:0 0;transform:scaleX(0.9578);-webkit-text-stroke:0.2px #5c5c5c">Visitors</div>
<div class="a t" style="left:495.80px;top:101.90px;font-size:11.7px;line-height:1;color:#5c5c5c;transform-origin:0 0;transform:scaleX(0.9234);-webkit-text-stroke:0.2px #5c5c5c">Countries</div>
<div class="a t" style="left:591.70px;top:101.90px;font-size:11.7px;line-height:1;color:#5c5c5c;transform-origin:0 0;transform:scaleX(0.9222);-webkit-text-stroke:0.2px #5c5c5c">Top Referrers</div>
<div class="a t" style="left:707.50px;top:101.90px;font-size:11.7px;line-height:1;color:#5c5c5c;transform-origin:0 0;transform:scaleX(0.9237);-webkit-text-stroke:0.2px #5c5c5c">Browsers</div>
<div class="a t" style="left:800.20px;top:101.90px;font-size:11.7px;line-height:1;color:#5c5c5c;transform-origin:0 0;transform:scaleX(0.9287);-webkit-text-stroke:0.2px #5c5c5c">Operating Systems</div>
<div class="a t" style="left:588.75px;top:144.37px;font-size:12.2px;line-height:1;color:#4c4c4c;transform-origin:0 0;transform:scaleX(0.9002)">last 24 hours | last 7 days | last 30 days | last 12 months</div>
<div class="a t" style="left:493.95px;top:529.54px;font-size:12px;line-height:1;color:#a8a8a8;transform-origin:0 0;transform:scaleX(0.8577)">Time</div>
<div class="a t" style="left:697.90px;top:529.54px;font-size:12px;line-height:1;color:#a8a8a8;transform-origin:0 0;transform:scaleX(0.9555)">Total Visits</div>
<div class="a t" style="left:917.70px;top:529.54px;font-size:12px;line-height:1;color:#a8a8a8;transform-origin:0 0;transform:scaleX(0.8926)">Percentage</div>
<div class="a t" style="left:499.20px;top:560.64px;font-size:12px;line-height:1;color:#555;transform-origin:0 0;transform:scaleX(0.8683)">13</div>
<div class="a t" style="left:722.10px;top:560.64px;font-size:12px;line-height:1;color:#555;transform-origin:0 0;transform:scaleX(0.8673)">1</div>
<div class="a t" style="left:927.95px;top:560.64px;font-size:12px;line-height:1;color:#555;transform-origin:0 0;transform:scaleX(0.8378)">100.0%</div>
<div class="a t" style="left:499.20px;top:591.14px;font-size:12px;line-height:1;color:#555;transform-origin:0 0;transform:scaleX(0.8683)">12</div>
<div class="a t" style="left:722.10px;top:591.14px;font-size:12px;line-height:1;color:#555;transform-origin:0 0;transform:scaleX(0.8673)">0</div>
<div class="a t" style="left:933.50px;top:591.14px;font-size:12px;line-height:1;color:#555;transform-origin:0 0;transform:scaleX(0.8407)">0.0%</div>
<div class="a t" style="left:499.20px;top:621.64px;font-size:12px;line-height:1;color:#555;transform-origin:0 0;transform:scaleX(0.9303)">11</div>
<div class="a t" style="left:722.10px;top:621.64px;font-size:12px;line-height:1;color:#555;transform-origin:0 0;transform:scaleX(0.8673)">0</div>
<div class="a t" style="left:933.50px;top:621.64px;font-size:12px;line-height:1;color:#555;transform-origin:0 0;transform:scaleX(0.8407)">0.0%</div>
<div class="a t" style="left:499.20px;top:652.64px;font-size:12px;line-height:1;color:#555;transform-origin:0 0;transform:scaleX(0.8683)">10</div>
<div class="a t" style="left:722.10px;top:652.64px;font-size:12px;line-height:1;color:#555;transform-origin:0 0;transform:scaleX(0.8673)">0</div>
<div class="a t" style="left:933.50px;top:652.64px;font-size:12px;line-height:1;color:#555;transform-origin:0 0;transform:scaleX(0.8407)">0.0%</div>
<div class="a t" style="left:499.20px;top:683.64px;font-size:12px;line-height:1;color:#555;transform-origin:0 0;transform:scaleX(0.8683)">09</div>
<div class="a t" style="left:722.10px;top:683.64px;font-size:12px;line-height:1;color:#555;transform-origin:0 0;transform:scaleX(0.8673)">0</div>
<div class="a t" style="left:933.50px;top:683.64px;font-size:12px;line-height:1;color:#555;transform-origin:0 0;transform:scaleX(0.8407)">0.0%</div>
<div class="a t" style="left:499.20px;top:714.14px;font-size:12px;line-height:1;color:#555;transform-origin:0 0;transform:scaleX(0.8683)">08</div>
<div class="a t" style="left:722.10px;top:714.14px;font-size:12px;line-height:1;color:#555;transform-origin:0 0;transform:scaleX(0.8673)">0</div>
<div class="a t" style="left:933.50px;top:714.14px;font-size:12px;line-height:1;color:#555;transform-origin:0 0;transform:scaleX(0.8407)">0.0%</div>
<div class="a t" style="left:499.20px;top:744.64px;font-size:12px;line-height:1;color:#555;transform-origin:0 0;transform:scaleX(0.8683)">07</div>
<div class="a t" style="left:722.10px;top:744.64px;font-size:12px;line-height:1;color:#555;transform-origin:0 0;transform:scaleX(0.8673)">0</div>
<div class="a t" style="left:933.50px;top:744.64px;font-size:12px;line-height:1;color:#555;transform-origin:0 0;transform:scaleX(0.8407)">0.0%</div>
<div class="a" style="left:1114.5px;top:326px;width:0;height:0;border-left:4.5px solid transparent;border-right:4.5px solid transparent;border-bottom:5px solid #1a1a1a"></div>
<div class="a" style="left:1085px;top:331px;width:69px;height:19px;border-radius:3px;background:#1a1a1a"></div>
<div class="a t" style="left:1092.70px;top:334.63px;font-size:10.6px;line-height:1;color:#fff;transform-origin:0 0;transform:scaleX(0.9481);-webkit-text-stroke:0.4px #fff">Image Stats</div>
</body></html>
